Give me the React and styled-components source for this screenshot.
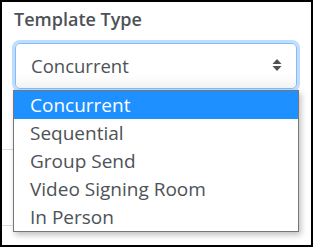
import React from 'react';
import styled, { createGlobalStyle } from 'styled-components';

const Global = createGlobalStyle`
    html, body {
        margin: 0;
        padding: 0;
        background: #fff;
    }
    * {
        box-sizing: border-box;
    }
`;

const Frame = styled.div`
    width: 313px;
    height: 247px;
    border: 2px solid #000;
    padding: 4px 11px 0 11px;
    font-family: 'Open Sans', 'Noto Sans', sans-serif;
    color: #4d5257;
    position: relative;
    overflow: hidden;
`;

const Label = styled.div`
    font-size: 18px;
    font-weight: 600;
    line-height: 26px;
    padding-left: 1px;
    margin-bottom: 11px;
`;

const Field = styled.div`
    position: relative;
    width: 286px;
`;

const Select = styled.div`
    height: 46px;
    margin: 0 2px;
    border: 1px solid #80bdff;
    border-radius: 5px;
    box-shadow: 0 0 0 3px rgba(0, 123, 255, 0.25);
    display: flex;
    align-items: center;
    justify-content: space-between;
    padding: 0 14px 2px 15px;
    font-size: 18.5px;
    background: linear-gradient(#fff 70%, #f3f3f3);
`;

const Caret = styled.svg`
    width: 10px;
    height: 14px;
    display: block;
`;

const Behind = styled.div`
    width: 150px;
    margin-left: -11px;
`;

const Line = styled.div`
    border-top: 1px solid #dcdcdc;
    margin-top: ${({ gap }) => gap}px;
`;

const Menu = styled.ul`
    position: absolute;
    left: 0;
    top: 47px;
    width: 286px;
    margin: 0;
    padding: 0;
    list-style: none;
    background: #fff;
    border: 1px solid #767676;
    box-shadow: 2px 3px 6px rgba(0, 0, 0, 0.25);
    z-index: 2;
`;

const Item = styled.li`
    height: 28px;
    line-height: 28px;
    padding-left: 16px;
    font-size: 19px;
    background: ${({ active }) => (active ? '#1e90ff' : 'transparent')};
    color: ${({ active }) => (active ? '#fff' : '#4d5257')};
`;

const options = ['Concurrent', 'Sequential', 'Group Send', 'Video Signing Room', 'In Person'];

const App = () => {
    return (
        <Frame>
            <Global />
            <Label>Template Type</Label>
            <Field>
                <Select>
                    <span>Concurrent</span>
                    <Caret viewBox="0 0 10 14">
                        <path d="M5 1 L9.5 6 H0.5 Z" fill="#4d5257" />
                        <path d="M5 13 L9.5 8 H0.5 Z" fill="#4d5257" />
                    </Caret>
                </Select>
                <Menu>
                    {options.map((o, i) => (
                        <Item key={o} active={i === 0}>
                            {o}
                        </Item>
                    ))}
                </Menu>
            </Field>
            <Behind>
                <Line gap={60} />
                <Line gap={75} />
            </Behind>
        </Frame>
    );
};

export default App;
